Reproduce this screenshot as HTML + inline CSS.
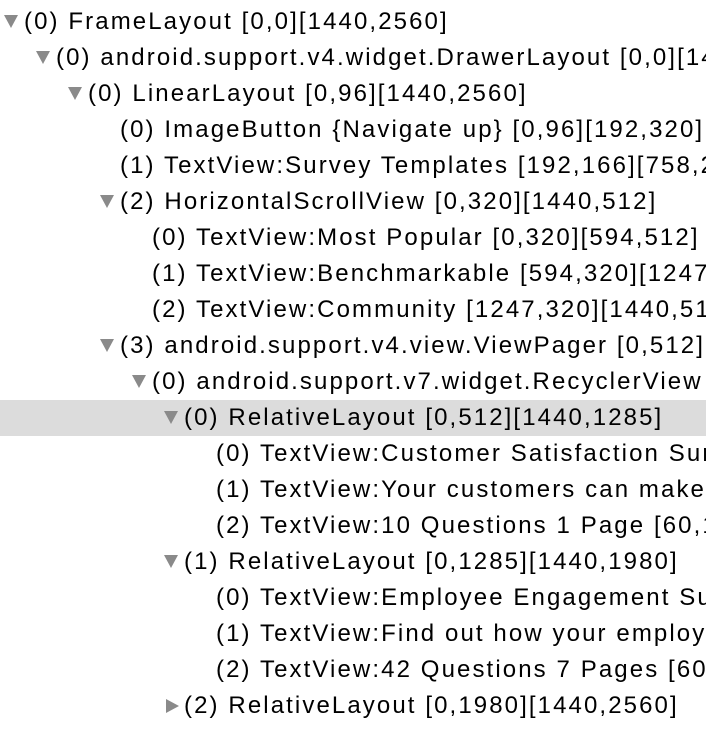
<!DOCTYPE html>
<html><head><meta charset="utf-8"><style>
html,body{margin:0;background:#fff;width:706px;height:736px;overflow:hidden;font-family:"Liberation Sans",sans-serif;}
.r{position:absolute;left:0;width:706px;height:36px;line-height:36px;font-size:24px;letter-spacing:2.1px;color:#000;white-space:nowrap;overflow:hidden;}
.r.h{background:#dcdcdc;}
.t{position:absolute;top:11px;width:0;height:0;border-left:7px solid transparent;border-right:7px solid transparent;border-top:13px solid #8a8a8a;}
.t.c{top:11px;border-top:7px solid transparent;border-bottom:7px solid transparent;border-left:13px solid #8a8a8a;border-right:0;}
.x{position:absolute;top:0;}
</style></head><body>
<div class="r" style="top:4px"><div class="t" style="left:4px"></div><span class="x" style="left:24px">(0) FrameLayout [0,0][1440,2560]</span></div>
<div class="r" style="top:40px"><div class="t" style="left:36px"></div><span class="x" style="left:56px">(0) android.support.v4.widget.DrawerLayout [0,0][1440,2560]</span></div>
<div class="r" style="top:76px"><div class="t" style="left:68px"></div><span class="x" style="left:88px">(0) LinearLayout [0,96][1440,2560]</span></div>
<div class="r" style="top:112px"><span class="x" style="left:120px">(0) ImageButton {Navigate up} [0,96][192,320]</span></div>
<div class="r" style="top:148px"><span class="x" style="left:120px">(1) TextView:Survey Templates [192,166][758,250]</span></div>
<div class="r" style="top:184px"><div class="t" style="left:100px"></div><span class="x" style="left:120px">(2) HorizontalScrollView [0,320][1440,512]</span></div>
<div class="r" style="top:220px"><span class="x" style="left:152px">(0) TextView:Most Popular [0,320][594,512]</span></div>
<div class="r" style="top:256px"><span class="x" style="left:152px">(1) TextView:Benchmarkable [594,320][1247,512]</span></div>
<div class="r" style="top:292px"><span class="x" style="left:152px">(2) TextView:Community [1247,320][1440,512]</span></div>
<div class="r" style="top:328px"><div class="t" style="left:100px"></div><span class="x" style="left:120px">(3) android.support.v4.view.ViewPager [0,512][1440,2560]</span></div>
<div class="r" style="top:364px"><div class="t" style="left:132px"></div><span class="x" style="left:152px">(0) android.support.v7.widget.RecyclerView [0,512][1440,2560]</span></div>
<div class="r h" style="top:400px"><div class="t" style="left:164px"></div><span class="x" style="left:184px">(0) RelativeLayout [0,512][1440,1285]</span></div>
<div class="r" style="top:436px"><span class="x" style="left:216px">(0) TextView:Customer Satisfaction Survey</span></div>
<div class="r" style="top:472px"><span class="x" style="left:216px">(1) TextView:Your customers can make or break</span></div>
<div class="r" style="top:508px"><span class="x" style="left:216px">(2) TextView:10 Questions 1 Page [60,1]</span></div>
<div class="r" style="top:544px"><div class="t" style="left:164px"></div><span class="x" style="left:184px">(1) RelativeLayout [0,1285][1440,1980]</span></div>
<div class="r" style="top:580px"><span class="x" style="left:216px">(0) TextView:Employee Engagement Survey</span></div>
<div class="r" style="top:616px"><span class="x" style="left:216px">(1) TextView:Find out how your employees</span></div>
<div class="r" style="top:652px"><span class="x" style="left:216px">(2) TextView:42 Questions 7 Pages [60,1]</span></div>
<div class="r" style="top:688px"><div class="t c" style="left:166px"></div><span class="x" style="left:184px">(2) RelativeLayout [0,1980][1440,2560]</span></div>
</body></html>
